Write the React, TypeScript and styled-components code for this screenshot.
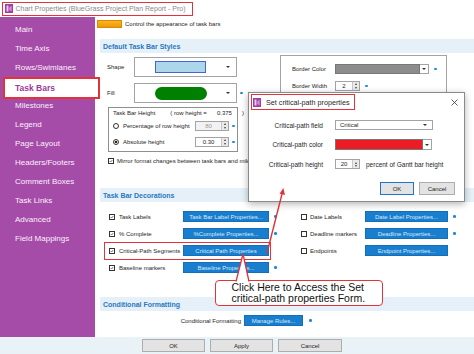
import React from 'react';
import styled, { createGlobalStyle, css } from 'styled-components';

const colors = {
  purple: '#a54ca8',
  band: '#e5f0f8',
  bandText: '#2b78bd',
  blue: '#1a7ecf',
  blueBorder: '#136fba',
  red: '#e2333b',
  dot: '#1d8ad8',
  bottom: '#e8f2f7',
  frame: '#a3a3a3',
  text: '#1e1e1e',
};

const GlobalStyle = createGlobalStyle`
  html, body {
    margin: 0;
    padding: 0;
    background: #fff;
  }
  #root {
    width: 474px;
    height: 354px;
  }
`;

const navItems = [
  'Main',
  'Time Axis',
  'Rows/Swimlanes',
  'Task Bars',
  'Milestones',
  'Legend',
  'Page Layout',
  'Headers/Footers',
  'Comment Boxes',
  'Task Links',
  'Advanced',
  'Field Mappings',
];

type Deco = { label: string; button: string; dot: boolean };

const leftDecos: Deco[] = [
  { label: 'Task Labels', button: 'Task Bar Label Properties...', dot: true },
  { label: '% Complete', button: '%Complete Properties...', dot: true },
  { label: 'Critical-Path Segments', button: 'Critical Path Properties', dot: false },
  { label: 'Baseline markers', button: 'Baseline Properties...', dot: true },
];

const rightDecos: (Deco | null)[] = [
  { label: 'Date Labels', button: 'Date Label Properties...', dot: true },
  { label: 'Deadline markers', button: 'Deadline Properties...', dot: true },
  { label: 'Endpoints', button: 'Endpoint Properties...', dot: false },
  null,
];

const AppIcon = () => (
  <svg width="8" height="9" viewBox="0 0 8 9">
    <rect width="8" height="9" fill="#9a41a0" />
    <path d="M1.5 1.5h2v6h-2z" fill="#f1c4f4" />
    <path d="M4.2 3.5l2.5-2v6l-2.5-1.6z" fill="#d889dc" />
  </svg>
);

const CheckMark = () => (
  <svg width="6" height="6" viewBox="0 0 6 6">
    <path d="M1 3.1l1.4 1.4L5 1.5" fill="none" stroke="#222" strokeWidth="0.9" />
  </svg>
);

const Checkbox: React.FC<{ checked?: boolean }> = ({ checked }) => (
  <CheckBoxBox>{checked && <CheckMark />}</CheckBoxBox>
);

const Spinner: React.FC<{ value: string; width: number; disabled?: boolean }> = ({
  value,
  width,
  disabled,
}) => (
  <SpinBox $width={width} $disabled={disabled}>
    <SpinValue>{value}</SpinValue>
    <SpinArrows>
      <Tri $up />
      <Tri />
    </SpinArrows>
  </SpinBox>
);

export default function App() {
  return (
    <>
      <GlobalStyle />
      <Window>
        <TitleBar>
          <TitleFrame>
            <AppIcon />
            <TitleText>Chart Properties (BlueGrass Project Plan Report - Pro)</TitleText>
          </TitleFrame>
        </TitleBar>

        <Body>
          <Sidebar>
            {navItems.map(item => (
              <NavItem key={item} $active={item === 'Task Bars'}>
                {item}
              </NavItem>
            ))}
          </Sidebar>

          <Content>
            <HintRow>
              <Swatch />
              <span>Control the appearance of task bars</span>
            </HintRow>

            <SectionBand $mt={11}>Default Task Bar Styles</SectionBand>

            <StylesArea>
              <LeftCol>
                <FieldRow>
                  <FieldLabel>Shape</FieldLabel>
                  <Combo>
                    <ShapeSwatch />
                    <Caret />
                  </Combo>
                </FieldRow>
                <FieldRow $mt={6}>
                  <FieldLabel>Fill</FieldLabel>
                  <Combo>
                    <FillPill />
                    <Caret />
                  </Combo>
                  <Dot $ml={3} />
                </FieldRow>

                <GroupBox>
                  <GroupTitle>
                    <span>Task Bar Height</span>
                    <RowHeightNote>( row height =</RowHeightNote>
                    <span>0.375</span>
                    <span>)</span>
                  </GroupTitle>
                  <RadioRow $mt={4}>
                    <Radio />
                    <RadioLabel>Percentage of row height</RadioLabel>
                    <Spinner value="80" width={34} disabled />
                    <Dot $ml={3} />
                  </RadioRow>
                  <RadioRow $mt={6}>
                    <Radio $checked />
                    <RadioLabel>Absolute height</RadioLabel>
                    <Spinner value="0.30" width={34} />
                    <Dot $ml={3} />
                  </RadioRow>
                </GroupBox>

                <MirrorRow>
                  <Checkbox checked />
                  <span>Mirror format changes between task bars and milestones</span>
                </MirrorRow>
              </LeftCol>

              <BorderPanel>
                <FieldRow>
                  <PanelLabel>Border Color</PanelLabel>
                  <ColorBox $color="#8c8c8c" $width={85} />
                  <DropButton>
                    <Caret />
                  </DropButton>
                  <Dot $ml={5} />
                </FieldRow>
                <FieldRow $mt={7}>
                  <PanelLabel>Border Width</PanelLabel>
                  <Spinner value="2" width={25} />
                  <Dot $ml={5} />
                </FieldRow>
              </BorderPanel>
            </StylesArea>

            <SectionBand $mt={13}>Task Bar Decorations</SectionBand>

            <DecoGrid>
              {leftDecos.map((left, i) => {
                const right = rightDecos[i];
                return (
                  <React.Fragment key={left.label}>
                    <CheckCell>
                      <Checkbox checked />
                      <span>{left.label}</span>
                    </CheckCell>
                    <DecoButton>{left.button}</DecoButton>
                    <DotCell>{left.dot && <Dot />}</DotCell>
                    {right ? (
                      <>
                        <CheckCell $gap={3}>
                          <Checkbox />
                          <span>{right.label}</span>
                        </CheckCell>
                        <DecoButton>{right.button}</DecoButton>
                        <DotCell>{right.dot && <Dot />}</DotCell>
                      </>
                    ) : (
                      <>
                        <span />
                        <span />
                        <span />
                      </>
                    )}
                  </React.Fragment>
                );
              })}
            </DecoGrid>

            <SectionBand $mt={24}>Conditional Formatting</SectionBand>

            <CondRow>
              <CondLabel>Conditional Formatting</CondLabel>
              <DecoButton $width={59}>Manage Rules...</DecoButton>
              <Dot $ml={6} />
            </CondRow>
          </Content>
        </Body>

        <BottomBar>
          <GrayButton $width={63}>OK</GrayButton>
          <GrayButton $width={63}>Apply</GrayButton>
          <GrayButton $width={64}>Cancel</GrayButton>
        </BottomBar>

        <Dialog>
          <DialogHeader>
            <DialogTitleFrame>
              <AppIcon />
              <DialogTitle>Set critical-path properties</DialogTitle>
            </DialogTitleFrame>
            <svg width="7" height="7" viewBox="0 0 7 7">
              <path d="M0.5 0.5l6 6M6.5 0.5l-6 6" stroke="#333" strokeWidth="0.8" />
            </svg>
          </DialogHeader>

          <DialogForm>
            <DialogLabel>Critical-path field</DialogLabel>
            <DialogCombo>
              <span>Critical</span>
              <Caret />
            </DialogCombo>

            <DialogLabel>Critical-path color</DialogLabel>
            <FieldRow>
              <ColorBox $color="#ed1c24" $width={88} $height={11} />
              <DropButton $height={11}>
                <Caret />
              </DropButton>
            </FieldRow>

            <DialogLabel>Critical-path height</DialogLabel>
            <FieldRow>
              <Spinner value="20" width={25} />
              <HeightNote>percent of Gantt bar height</HeightNote>
            </FieldRow>
          </DialogForm>

          <DialogButtons>
            <GrayButton $width={34} $focused>
              OK
            </GrayButton>
            <GrayButton $width={36}>Cancel</GrayButton>
          </DialogButtons>
        </Dialog>

        <Highlight />

        <Callout>
          Click Here to Access the Set
          <br />
          critical-path properties Form.
        </Callout>

        <Annotations viewBox="0 0 474 354">
          <polygon points="236,282.5 243,254 249,282.5" fill="#fff" />
          <polyline
            points="236,281.5 243,254 249,281.5"
            fill="none"
            stroke={colors.red}
            strokeWidth="1.3"
          />
          <line x1="267" y1="253" x2="282" y2="194" stroke={colors.red} strokeWidth="1.4" />
          <polygon points="283.3,188 285,195 279.6,193.7" fill={colors.red} />
        </Annotations>
      </Window>
    </>
  );
}

const Window = styled.div`
  position: relative;
  width: 474px;
  height: 354px;
  display: flex;
  flex-direction: column;
  overflow: hidden;
  background: #fff;
  color: ${colors.text};
  font-family: 'Liberation Sans', Arial, sans-serif;
`;

const TitleBar = styled.header`
  height: 17px;
  display: flex;
  align-items: center;
  padding-left: 2px;
`;

const TitleFrame = styled.div`
  width: 191px;
  height: 14px;
  box-sizing: border-box;
  border: 1.5px solid ${colors.red};
  display: flex;
  align-items: center;
  gap: 3px;
  padding-left: 1.5px;
`;

const TitleText = styled.span`
  font-size: 7px;
  color: #8a8a8a;
  white-space: nowrap;
`;

const Body = styled.div`
  display: flex;
  height: 320px;
`;

const Sidebar = styled.nav`
  width: 95px;
  flex-shrink: 0;
  box-sizing: border-box;
  padding-top: 3px;
  background: ${colors.purple};
  display: flex;
  flex-direction: column;
`;

const NavItem = styled.div<{ $active?: boolean }>`
  height: 19px;
  line-height: 19px;
  padding-left: 15px;
  font-size: 8px;
  color: #fbeffb;
  white-space: nowrap;
  ${({ $active }) =>
    $active &&
    css`
      position: relative;
      z-index: 1;
      width: 97px;
      height: 22px;
      box-sizing: border-box;
      margin: 0 0 -3px 3px;
      padding-left: 10px;
      line-height: 18px;
      border: 2px solid ${colors.red};
      background: #fff;
      color: #9b3a9e;
      font-size: 8.5px;
      font-weight: bold;
    `}
`;

const Content = styled.main`
  flex: 1;
  min-width: 0;
  display: flex;
  flex-direction: column;
  background: #fff;
  font-size: 6px;
`;

const HintRow = styled.div`
  display: flex;
  align-items: center;
  gap: 3px;
  height: 9px;
  margin: 2px 0 0 2px;
  font-size: 6px;
`;

const Swatch = styled.span`
  width: 25px;
  height: 8px;
  box-sizing: border-box;
  border: 0.5px solid #d98a00;
  background: linear-gradient(#f8b422, #ee9905);
`;

const SectionBand = styled.div<{ $mt: number }>`
  height: 14px;
  margin: ${({ $mt }) => $mt}px 0 0 5px;
  padding-left: 3px;
  display: flex;
  align-items: center;
  background: ${colors.band};
  color: ${colors.bandText};
  font-size: 7px;
  font-weight: bold;
`;

const StylesArea = styled.div`
  display: flex;
  margin-top: 2px;
  padding-left: 12px;
`;

const LeftCol = styled.div`
  width: 173px;
  flex-shrink: 0;
  display: flex;
  flex-direction: column;
  padding-top: 2px;
`;

const FieldRow = styled.div<{ $mt?: number }>`
  display: flex;
  align-items: center;
  margin-top: ${({ $mt }) => $mt || 0}px;
`;

const FieldLabel = styled.span`
  width: 27px;
  font-size: 6px;
`;

const Combo = styled.div`
  width: 103px;
  height: 20px;
  box-sizing: border-box;
  border: 1px solid ${colors.frame};
  padding: 0 6px 0 20px;
  display: flex;
  align-items: center;
  justify-content: space-between;
`;

const ShapeSwatch = styled.span`
  width: 51px;
  height: 12px;
  box-sizing: border-box;
  border: 1px solid #4a63d0;
  background: #acd6ea;
`;

const FillPill = styled.span`
  width: 52px;
  height: 13px;
  border-radius: 7px;
  background: #008000;
`;

const Caret = styled.span`
  width: 0;
  height: 0;
  border-left: 2px solid transparent;
  border-right: 2px solid transparent;
  border-top: 2.5px solid #333;
`;

const Dot = styled.span<{ $ml?: number }>`
  width: 2.5px;
  height: 2.5px;
  border-radius: 50%;
  margin-left: ${({ $ml }) => $ml || 0}px;
  background: ${colors.dot};
`;

const GroupBox = styled.div`
  width: 130px;
  height: 45px;
  box-sizing: border-box;
  margin: 4px 0 0 1px;
  padding: 1px 0 0 4px;
  border: 1px solid #8f8f8f;
  display: flex;
  flex-direction: column;
`;

const GroupTitle = styled.div`
  height: 8px;
  display: flex;
  align-items: center;
  gap: 10px;
  font-size: 6px;
  white-space: nowrap;
`;

const RowHeightNote = styled.span`
  margin-left: 5px;
`;

const RadioRow = styled.div<{ $mt: number }>`
  height: 10px;
  margin-top: ${({ $mt }) => $mt}px;
  display: flex;
  align-items: center;
`;

const Radio = styled.span<{ $checked?: boolean }>`
  width: 6px;
  height: 6px;
  box-sizing: border-box;
  border: 0.8px solid #333;
  border-radius: 50%;
  background: ${({ $checked }) =>
    $checked ? 'radial-gradient(circle, #222 0 1.4px, #fff 1.6px)' : '#fff'};
`;

const RadioLabel = styled.span`
  width: 72px;
  margin-left: 4px;
  white-space: nowrap;
`;

const SpinBox = styled.div<{ $width: number; $disabled?: boolean }>`
  width: ${({ $width }) => $width}px;
  height: 10px;
  box-sizing: border-box;
  border: 1px solid ${colors.frame};
  display: flex;
  align-items: center;
  background: ${({ $disabled }) => ($disabled ? '#f2f2f2' : '#fff')};
  color: ${({ $disabled }) => ($disabled ? '#9a9a9a' : colors.text)};
  font-size: 6px;
`;

const SpinValue = styled.span`
  flex: 1;
  text-align: center;
`;

const SpinArrows = styled.span`
  width: 6px;
  height: 100%;
  border-left: 1px solid #c8c8c8;
  background: #eaeaea;
  display: flex;
  flex-direction: column;
  align-items: center;
  justify-content: space-evenly;
`;

const Tri = styled.span<{ $up?: boolean }>`
  width: 0;
  height: 0;
  border-left: 1.5px solid transparent;
  border-right: 1.5px solid transparent;
  ${({ $up }) =>
    $up ? 'border-bottom: 2px solid #444;' : 'border-top: 2px solid #444;'}
`;

const CheckBoxBox = styled.span`
  width: 6px;
  height: 6px;
  flex-shrink: 0;
  box-sizing: border-box;
  border: 0.8px solid #333;
  background: #fff;
  display: flex;
  align-items: center;
  justify-content: center;
`;

const MirrorRow = styled.div`
  height: 10px;
  margin: 4px 0 0 1px;
  display: flex;
  align-items: center;
  gap: 3px;
  white-space: nowrap;
`;

const BorderPanel = styled.div`
  width: 167px;
  height: 120px;
  box-sizing: border-box;
  padding: 8px 0 0 11px;
  border: 1px solid ${colors.frame};
  display: flex;
  flex-direction: column;
`;

const PanelLabel = styled.span`
  width: 43px;
  font-size: 6px;
  white-space: nowrap;
`;

const ColorBox = styled.span<{ $color: string; $width: number; $height?: number }>`
  width: ${({ $width }) => $width}px;
  height: ${({ $height }) => $height || 10}px;
  box-sizing: border-box;
  border: 1px solid #777;
  background: ${({ $color }) => $color};
`;

const DropButton = styled.span<{ $height?: number }>`
  width: 9px;
  height: ${({ $height }) => $height || 10}px;
  box-sizing: border-box;
  border: 1px solid ${colors.frame};
  border-left: none;
  background: #fff;
  display: flex;
  align-items: center;
  justify-content: center;
`;

const DecoGrid = styled.div`
  display: grid;
  grid-template-columns: 74px 86px 32px 64px 83px 10px;
  grid-auto-rows: 11px;
  row-gap: 6px;
  align-items: center;
  margin: 9px 0 0 14px;
`;

const CheckCell = styled.div<{ $gap?: number }>`
  display: flex;
  align-items: center;
  gap: ${({ $gap }) => $gap || 4}px;
  white-space: nowrap;
`;

const DecoButton = styled.div<{ $width?: number }>`
  ${({ $width }) => ($width ? `width: ${$width}px;` : '')}
  height: 11px;
  box-sizing: border-box;
  border: 1px solid ${colors.blueBorder};
  background: ${colors.blue};
  color: #d9eaf8;
  font-size: 6px;
  display: flex;
  align-items: center;
  justify-content: center;
  white-space: nowrap;
`;

const DotCell = styled.div`
  display: flex;
  align-items: center;
  padding-left: 5px;
`;

const CondRow = styled.div`
  height: 11px;
  margin: 4px 0 0 85px;
  display: flex;
  align-items: center;
`;

const CondLabel = styled.span`
  width: 61px;
  margin-right: 3px;
  text-align: right;
  white-space: nowrap;
`;

const BottomBar = styled.footer`
  height: 17px;
  display: flex;
  align-items: center;
  gap: 5px;
  padding-left: 142px;
  background: ${colors.bottom};
`;

const GrayButton = styled.div<{ $width: number; $focused?: boolean }>`
  width: ${({ $width }) => $width}px;
  height: 13px;
  box-sizing: border-box;
  border: 1px solid ${({ $focused }) => ($focused ? '#1b74d0' : '#adadad')};
  background: #e3e3e3;
  display: flex;
  align-items: center;
  justify-content: center;
  font-size: 6px;
  color: ${colors.text};
`;

const Dialog = styled.section`
  position: absolute;
  left: 248px;
  top: 92px;
  width: 217px;
  height: 110px;
  box-sizing: border-box;
  border: 1px solid #8a8a8a;
  background: #fff;
  box-shadow: 0 2px 7px rgba(0, 0, 0, 0.3);
  display: flex;
  flex-direction: column;
`;

const DialogHeader = styled.div`
  height: 18px;
  display: flex;
  align-items: center;
  justify-content: space-between;
  padding: 0 6px 0 2px;
`;

const DialogTitleFrame = styled.div`
  width: 104px;
  height: 16px;
  box-sizing: border-box;
  border: 1.5px solid ${colors.red};
  display: flex;
  align-items: center;
  gap: 5px;
  padding-left: 1px;
`;

const DialogTitle = styled.span`
  font-size: 7.2px;
  white-space: nowrap;
`;

const DialogForm = styled.div`
  display: grid;
  grid-template-columns: 74px auto;
  column-gap: 12px;
  row-gap: 9px;
  grid-auto-rows: 10.5px;
  align-items: center;
  margin-top: 9px;
`;

const DialogLabel = styled.span`
  font-size: 6.5px;
  text-align: right;
  white-space: nowrap;
`;

const DialogCombo = styled.div`
  width: 98px;
  height: 10px;
  box-sizing: border-box;
  border: 1px solid ${colors.frame};
  padding: 0 5px 0 4px;
  display: flex;
  align-items: center;
  justify-content: space-between;
  font-size: 6px;
`;

const HeightNote = styled.span`
  margin-left: 6px;
  font-size: 6.5px;
  white-space: nowrap;
`;

const DialogButtons = styled.div`
  display: flex;
  justify-content: flex-end;
  gap: 5px;
  margin-top: auto;
  margin-bottom: 6px;
  padding-right: 9px;
`;

const Highlight = styled.div`
  position: absolute;
  left: 104px;
  top: 242px;
  width: 167px;
  height: 18px;
  box-sizing: border-box;
  border: 1.5px solid ${colors.red};
`;

const Callout = styled.div`
  position: absolute;
  left: 215px;
  top: 280px;
  width: 168px;
  height: 26px;
  box-sizing: border-box;
  padding: 1px 0 0 15.5px;
  border: 1.5px solid ${colors.red};
  border-radius: 4px;
  background: #fff;
  color: #111;
  font-size: 10.5px;
  line-height: 10.5px;
  white-space: nowrap;
`;

const Annotations = styled.svg`
  position: absolute;
  left: 0;
  top: 0;
  width: 474px;
  height: 354px;
  pointer-events: none;
`;
